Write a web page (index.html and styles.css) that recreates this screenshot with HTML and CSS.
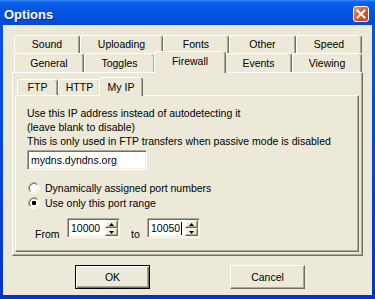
FILE: index.html
```html
<!DOCTYPE html>
<html>
<head>
<meta charset="utf-8">
<link rel="stylesheet" href="styles.css">
</head>
<body>
<div class="window">
  <div class="titlebar">
    <span class="title">Options</span>
    <span class="close"><svg width="10" height="10" viewBox="0 0 10 10"><path d="M1.5 1.5L8.5 8.5M8.5 1.5L1.5 8.5" stroke="#fff" stroke-width="2" stroke-linecap="square"/></svg></span>
  </div>
  <div class="client">
    <div class="tabs">
      <div class="tabrow">
        <div class="tab w66">Sound</div>
        <div class="tab w83">Uploading</div>
        <div class="tab w66">Fonts</div>
        <div class="tab w67">Other</div>
        <div class="tab w66">Speed</div>
      </div>
      <div class="tabrow front">
        <div class="tab w70">General</div>
        <div class="tab w71">Toggles</div>
        <div class="tab w70 sel">Firewall</div>
        <div class="tab w67">Events</div>
        <div class="tab w70">Viewing</div>
      </div>
    </div>
    <div class="panel">
      <div class="subtabs">
        <div class="stab s41">FTP</div>
        <div class="stab s43">HTTP</div>
        <div class="stab s42 sel">My IP</div>
      </div>
      <div class="subpanel">
        <p class="line">Use this IP address instead of autodetecting it</p>
        <p class="line">(leave blank to disable)</p>
        <p class="line">This is only used in FTP transfers when passive mode is disabled</p>
        <div class="textbox">mydns.dyndns.org</div>
        <div class="radios">
          <div class="radio-row">
            <svg class="radio" width="12" height="12" viewBox="0 0 12 12"><circle cx="6" cy="6" r="4.5" fill="#fff"/><path d="M2.11 9.89A5.5 5.5 0 0 1 9.89 2.11" fill="none" stroke="#ACA899"/><path d="M9.89 2.11A5.5 5.5 0 0 1 2.11 9.89" fill="none" stroke="#fff"/><path d="M2.82 9.18A4.5 4.5 0 0 1 9.18 2.82" fill="none" stroke="#716F64"/><path d="M9.18 2.82A4.5 4.5 0 0 1 2.82 9.18" fill="none" stroke="#F1EFE2"/></svg>
            <span>Dynamically assigned port numbers</span>
          </div>
          <div class="radio-row">
            <svg class="radio" width="12" height="12" viewBox="0 0 12 12"><circle cx="6" cy="6" r="4.5" fill="#fff"/><path d="M2.11 9.89A5.5 5.5 0 0 1 9.89 2.11" fill="none" stroke="#ACA899"/><path d="M9.89 2.11A5.5 5.5 0 0 1 2.11 9.89" fill="none" stroke="#fff"/><path d="M2.82 9.18A4.5 4.5 0 0 1 9.18 2.82" fill="none" stroke="#716F64"/><path d="M9.18 2.82A4.5 4.5 0 0 1 2.82 9.18" fill="none" stroke="#F1EFE2"/><rect x="4" y="4" width="4" height="4" rx="1" fill="#000"/></svg>
            <span>Use only this port range</span>
          </div>
        </div>
        <div class="range">
          <span class="lbl from">From</span>
          <div class="spin">
            <span class="val">10000</span>
            <div class="spin-btns">
              <span class="sb"><svg width="5" height="3" viewBox="0 0 5 3"><path d="M0 3L2.5 0L5 3Z" fill="#000"/></svg></span>
              <span class="sb"><svg width="5" height="3" viewBox="0 0 5 3"><path d="M0 0L2.5 3L5 0Z" fill="#000"/></svg></span>
            </div>
          </div>
          <span class="lbl to">to</span>
          <div class="spin">
            <span class="val">10050<span class="caret"></span></span>
            <div class="spin-btns">
              <span class="sb"><svg width="5" height="3" viewBox="0 0 5 3"><path d="M0 3L2.5 0L5 3Z" fill="#000"/></svg></span>
              <span class="sb"><svg width="5" height="3" viewBox="0 0 5 3"><path d="M0 0L2.5 3L5 0Z" fill="#000"/></svg></span>
            </div>
          </div>
        </div>
      </div>
    </div>
    <div class="buttons">
      <div class="btn default">OK</div>
      <div class="btn">Cancel</div>
    </div>
  </div>
</div>
</body>
</html>
```

FILE: styles.css
```css
* { box-sizing: border-box; }
body {
  margin: 0;
  font-family: "Liberation Sans", Arial, sans-serif;
  font-size: 10.5px;
  color: #000;
}
.window {
  width: 375px;
  height: 299px;
  display: flex;
  flex-direction: column;
  background: linear-gradient(180deg, #0A55E0 0%, #0743D2 60%, #0533C4 100%);
}
.titlebar {
  height: 25px;
  flex: none;
  display: flex;
  align-items: flex-start;
  justify-content: space-between;
  padding: 0 6px 0 4px;
  background: linear-gradient(180deg, #3D8BF7 0, #0B62EA 2px, #0657E4 8px, #0350DC 18px, #0549D3 25px);
  color: #fff;
}
.title {
  font-weight: bold;
  font-size: 13px;
  line-height: 16px;
  margin-top: 7px;
  text-shadow: 1px 1px 0 #0A2C9A;
}
.close {
  width: 16px;
  height: 16px;
  margin-top: 6px;
  border: 1px solid #fff;
  border-radius: 3px;
  background: linear-gradient(135deg, #ED9270 0%, #DA5A30 45%, #C1400F 100%);
  display: flex;
  align-items: center;
  justify-content: center;
}
.client {
  flex: 1;
  margin: 0 3px 4px;
  background: #ECE9D8;
  padding: 10px 9px 0 9px;
  display: flex;
  flex-direction: column;
}
.tabs { margin: 0 1px 0 2px; }
.tabrow { display: flex; height: 18px; }
.tabrow.front { height: 19px; }
.tab, .stab {
  flex: none;
  height: 100%;
  display: flex;
  justify-content: center;
  align-items: center;
  line-height: 13px;
  background: #ECE9D8;
  border-top: 1px solid #fff;
  border-left: 1px solid #fff;
  border-right: 1px solid #716F64;
  box-shadow: inset -1px 0 #ACA899;
  border-radius: 3px 3px 0 0;
  white-space: nowrap;
}
.w66 { width: 66px; }
.w67 { width: 67px; }
.w70 { width: 70px; }
.w71 { width: 71px; }
.w83 { width: 83px; }
.tab.sel {
  height: 22px;
  margin: -2px -1px -1px -1px;
  width: 72px;
  position: relative;
  z-index: 1;
  align-items: flex-start;
  padding-top: 3px;
}
.panel {
  height: 184px;
  flex: none;
  border: 1px solid;
  border-color: #fff #716F64 #716F64 #fff;
  box-shadow: inset -1px -1px #ACA899;
  padding: 6px 3px 3px 2px;
  display: flex;
  flex-direction: column;
}
.subtabs { display: flex; height: 16px; margin-left: 2px; flex: none; }
.s41 { width: 41px; }
.s42 { width: 42px; }
.s43 { width: 43px; }
.stab.sel {
  height: 19px;
  width: 44px;
  margin: -2px -1px -1px -2px;
  position: relative;
  z-index: 1;
  align-items: flex-start;
  padding-top: 3px;
}
.subpanel {
  flex: 1;
  border: 1px solid;
  border-color: #fff #716F64 #716F64 #fff;
  box-shadow: inset -1px -1px #ACA899;
  padding: 10px 0 0 11px;
}
.line {
  margin: 0;
  line-height: 14px;
  white-space: nowrap;
}
.textbox {
  width: 120px;
  height: 20px;
  margin-top: 2px;
  background: #fff;
  border: 1px solid;
  border-color: #ACA899 #fff #fff #ACA899;
  box-shadow: inset 1px 1px #716F64, inset -1px -1px #F1EFE2;
  padding: 0 3px;
  line-height: 18px;
}
.radios { margin-top: 10px; }
.radio-row {
  display: flex;
  align-items: center;
  height: 15px;
}
.radio { margin: 0 5px 0 1px; flex: none; }
.range {
  display: flex;
  align-items: flex-start;
  margin-top: 8px;
  padding-left: 8px;
}
.lbl { line-height: 14px; margin-top: 9px; }
.from { width: 32px; }
.to { width: 16px; margin-left: 11px; }
.spin {
  width: 53px;
  height: 20px;
  display: flex;
  align-items: center;
  background: #fff;
  border: 1px solid;
  border-color: #ACA899 #fff #fff #ACA899;
  box-shadow: inset 1px 1px #716F64, inset -1px -1px #F1EFE2;
  padding: 1px 1px 1px 3px;
}
.val { flex: 1; line-height: 14px; display: flex; align-items: center; }
.caret {
  display: inline-block;
  width: 1px;
  height: 13px;
  background: #000;
  margin-left: 1px;
}
.spin-btns {
  display: flex;
  flex-direction: column;
  width: 13px;
  height: 16px;
}
.sb {
  height: 8px;
  display: flex;
  align-items: center;
  justify-content: center;
  background: #ECE9D8;
  border: 1px solid;
  border-color: #F1EFE2 #716F64 #716F64 #F1EFE2;
  box-shadow: inset -1px -1px #ACA899, inset 1px 1px #fff;
}
.buttons {
  display: flex;
  margin-top: 9px;
  padding-left: 63px;
  gap: 80px;
}
.btn {
  width: 75px;
  height: 24px;
  display: flex;
  align-items: center;
  justify-content: center;
  background: #ECE9D8;
  border: 1px solid;
  border-color: #fff #716F64 #716F64 #fff;
  box-shadow: inset -1px -1px #ACA899;
}
.btn.default {
  border: 1px solid #000;
  box-shadow: inset 1px 1px #fff, inset -1px -1px #716F64, inset -2px -2px #ACA899;
}
```
